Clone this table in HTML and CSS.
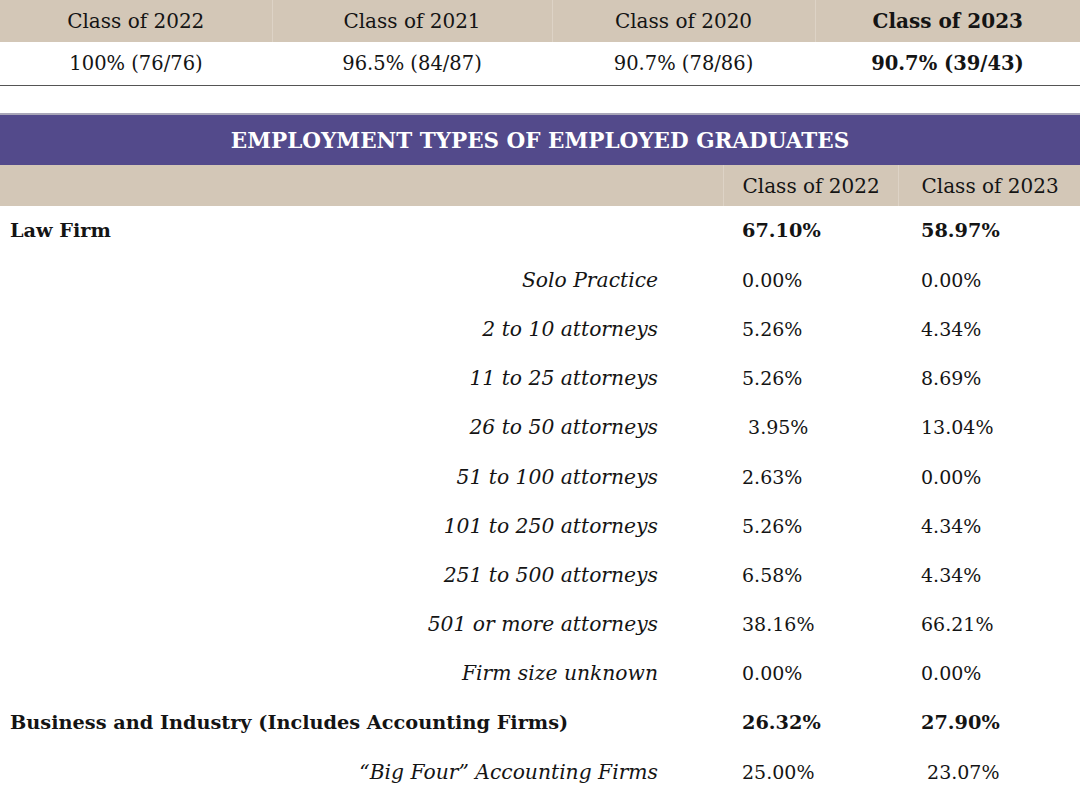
FILE: index.html
```html
<!DOCTYPE html>
<html>
<head>
<meta charset="utf-8">
<link rel="stylesheet" href="styles.css">
</head>
<body>
<table class="rates">
  <colgroup>
    <col class="c1"><col class="c2"><col class="c3"><col class="c4">
  </colgroup>
  <thead>
    <tr><th>Class of 2022</th><th>Class of 2021</th><th>Class of 2020</th><th class="strong">Class of 2023</th></tr>
  </thead>
  <tbody>
    <tr><td>100% (76/76)</td><td>96.5% (84/87)</td><td>90.7% (78/86)</td><td class="strong">90.7% (39/43)</td></tr>
  </tbody>
</table>

<table class="types">
  <colgroup>
    <col class="lab"><col class="v1"><col class="v2">
  </colgroup>
  <thead>
    <tr class="title"><th colspan="3">EMPLOYMENT TYPES OF EMPLOYED GRADUATES</th></tr>
    <tr class="sub"><th></th><th>Class of 2022</th><th>Class of 2023</th></tr>
  </thead>
  <tbody>
    <tr class="cat"><td>Law Firm</td><td>67.10%</td><td>58.97%</td></tr>
    <tr class="item"><td>Solo Practice</td><td>0.00%</td><td>0.00%</td></tr>
    <tr class="item"><td>2 to 10 attorneys</td><td>5.26%</td><td>4.34%</td></tr>
    <tr class="item"><td>11 to 25 attorneys</td><td>5.26%</td><td>8.69%</td></tr>
    <tr class="item"><td>26 to 50 attorneys</td><td>&nbsp;3.95%</td><td>13.04%</td></tr>
    <tr class="item"><td>51 to 100 attorneys</td><td>2.63%</td><td>0.00%</td></tr>
    <tr class="item"><td>101 to 250 attorneys</td><td>5.26%</td><td>4.34%</td></tr>
    <tr class="item"><td>251 to 500 attorneys</td><td>6.58%</td><td>4.34%</td></tr>
    <tr class="item"><td>501 or more attorneys</td><td>38.16%</td><td>66.21%</td></tr>
    <tr class="item"><td>Firm size unknown</td><td>0.00%</td><td>0.00%</td></tr>
    <tr class="cat"><td>Business and Industry (Includes Accounting Firms)</td><td>26.32%</td><td>27.90%</td></tr>
    <tr class="item"><td>“Big Four” Accounting Firms</td><td>25.00%</td><td>&nbsp;23.07%</td></tr>
  </tbody>
</table>
</body>
</html>
```

FILE: styles.css
```css
html, body {
  margin: 0;
  padding: 0;
  background: #ffffff;
}
body {
  font-family: "DejaVu Serif", "Liberation Serif", serif;
  color: #141414;
  overflow: hidden;
}
table {
  border-collapse: collapse;
  width: 1080px;
  table-layout: fixed;
}
.rates .c1 { width: 272px; }
.rates .c2 { width: 280px; }
.rates .c3 { width: 263px; }
.rates .c4 { width: 265px; }
.rates th, .rates td {
  font-size: 20px;
  font-weight: normal;
  text-align: center;
  padding: 0;
}
.rates td { font-size: 19.5px; }
.rates th {
  background: #d3c7b7;
  height: 42px;
  border-left: 1px solid #ddd3c6;
}
.rates th:first-child { border-left: none; }
.rates td {
  height: 43px;
  border-bottom: 1px solid #555555;
}
.rates .strong { font-weight: bold; }

.types { margin-top: 27px; }
.types .lab { width: 723px; }
.types .v1 { width: 175px; }
.types .v2 { width: 182px; }
.types .title th {
  background: #534a8b;
  color: #ffffff;
  font-weight: bold;
  font-size: 21.5px;
  height: 50px;
  border-top: 2px solid #a9a6b8;
  padding: 0;
  text-align: center;
}
.types .sub th {
  background: #d3c7b7;
  height: 41px;
  font-weight: normal;
  font-size: 20px;
  text-align: left;
  padding: 0 0 0 19px;
  border-left: 1px solid #ddd3c6;
}
.types .sub th:first-child { border-left: none; }
.types .sub th:last-child { padding-left: 23px; }
.types td {
  height: 49.2px;
  padding: 0 0 0 19px;
  font-size: 19px;
  vertical-align: middle;
}
.types td:last-child { padding-left: 23px; }
.types .cat td { font-weight: bold; font-size: 19.3px; }
.types .cat td:first-child { padding-left: 10px; }
.types .item td:first-child {
  text-align: right;
  font-style: italic;
  font-size: 20.3px;
  padding: 0 65px 0 0;
}
```
